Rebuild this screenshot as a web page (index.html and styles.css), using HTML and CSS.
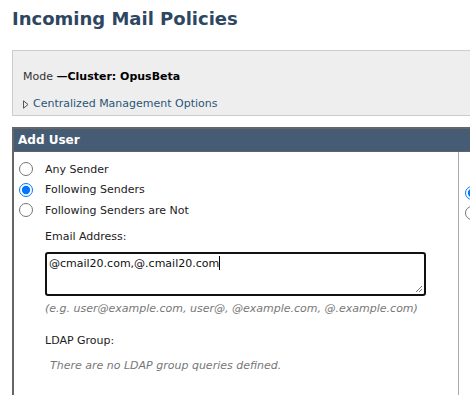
FILE: index.html
```html
<!DOCTYPE html>
<html lang="en">
<head>
    <meta charset="UTF-8">
    <meta name="viewport" content="width=device-width, initial-scale=1.0">
    <title>Incoming Mail Policies</title>
    <link rel="stylesheet" href="styles.css">
</head>
<body>
    <div class="page">
        <h1 class="page-title">Incoming Mail Policies</h1>

        <div class="mode-box">
            <div class="mode-line">Mode <b>&mdash;Cluster: OpusBeta</b></div>
            <div class="cm-options">
                <svg class="cm-arrow" width="6" height="9" viewBox="0 0 6 9">
                    <path d="M0.5 0.8 L5 4.5 L0.5 8.2 Z" fill="none" stroke="#555" stroke-width="1"/>
                </svg>
                Centralized Management Options
            </div>
        </div>

        <div class="panel">
            <div class="panel-header">Add User</div>
            <div class="panel-body">
                <div class="panel-main">
                    <label class="radio-row"><input type="radio" name="sender"> Any Sender</label>
                    <label class="radio-row"><input type="radio" name="sender" checked> Following Senders</label>
                    <label class="radio-row"><input type="radio" name="sender"> Following Senders are Not</label>

                    <div class="field">
                        <div class="field-label">Email Address:</div>
                        <div class="email-box">@cmail20.com,@.cmail20.com<span class="caret"></span>
                            <svg class="grip" width="9" height="9" viewBox="0 0 9 9">
                                <path d="M8 2 L2 8 M8 5 L5 8" stroke="#777" stroke-width="1"/>
                            </svg>
                        </div>
                        <div class="hint">(e.g. user@example.com, user@, @example.com, @.example.com)</div>
                    </div>

                    <div class="field ldap">
                        <div class="field-label">LDAP Group:</div>
                        <div class="hint none">There are no LDAP group queries defined.</div>
                    </div>
                </div>
                <div class="panel-side">
                    <input type="radio" name="side" checked>
                    <input type="radio" name="side">
                </div>
            </div>
        </div>
    </div>
</body>
</html>
```

FILE: styles.css
```css
body {
    margin: 0;
    font-family: "DejaVu Sans", Verdana, sans-serif;
    font-size: 12px;
    color: #222;
    background: white;
    overflow: hidden;
}

.page {
    padding-left: 12px;
}

.page-title {
    margin: 0;
    padding-top: 8px;
    font-size: 18px;
    line-height: 22px;
    color: #2d4762;
    font-weight: bold;
}

.mode-box {
    margin-top: 20px;
    height: 64px;
    background: #eeeeee;
    border: 1px solid #cccccc;
    border-right: none;
    padding-left: 10px;
    box-sizing: content-box;
}

.mode-line {
    margin-top: 18px;
    line-height: 16px;
    font-size: 11px;
    color: #333;
}

.mode-line b {
    color: #000;
}

.cm-options {
    margin-top: 11px;
    font-size: 11px;
    line-height: 16px;
    color: #2b5577;
    display: flex;
    align-items: center;
    gap: 4px;
}

.panel {
    margin-top: 11px;
    border-left: 2px solid #666;
}

.panel-header {
    background: #465c74;
    border-top: 2px solid #666;
    border-bottom: 1px solid #5a6470;
    color: white;
    font-weight: bold;
    font-size: 12px;
    line-height: 22px;
    padding-left: 4px;
}

.panel-body {
    display: flex;
    height: 243px;
}

.panel-main {
    width: 444px;
    flex-shrink: 0;
    padding-top: 7px;
}

.panel-side {
    border-left: 1px solid #aaa;
    padding-top: 34px;
    padding-left: 6px;
    display: flex;
    flex-direction: column;
    gap: 6px;
}

.panel-side input {
    margin: 0;
    width: 14px;
    height: 14px;
}

.radio-row {
    display: flex;
    align-items: center;
    height: 20.5px;
    font-size: 11px;
}

.radio-row input {
    margin: 0 12px 0 5px;
    width: 14px;
    height: 14px;
}

.field {
    padding-left: 31px;
}

.field-label {
    margin-top: 8px;
    line-height: 16px;
    font-size: 11px;
}

.email-box {
    position: relative;
    margin-top: 7px;
    width: 373px;
    height: 36px;
    border: 2px solid #111;
    border-radius: 3px;
    padding: 2px 2px;
    font-size: 11px;
    line-height: 16px;
    color: #111;
}

.caret {
    display: inline-block;
    width: 1px;
    height: 14px;
    background: #000;
    vertical-align: -3px;
}

.grip {
    position: absolute;
    right: 1px;
    bottom: 1px;
}

.hint {
    margin-top: 5px;
    line-height: 16px;
    font-size: 11px;
    font-style: italic;
    color: #777;
}

.ldap .field-label {
    margin-top: 16px;
}

.hint.none {
    margin-top: 9px;
    padding-left: 5px;
}
```
